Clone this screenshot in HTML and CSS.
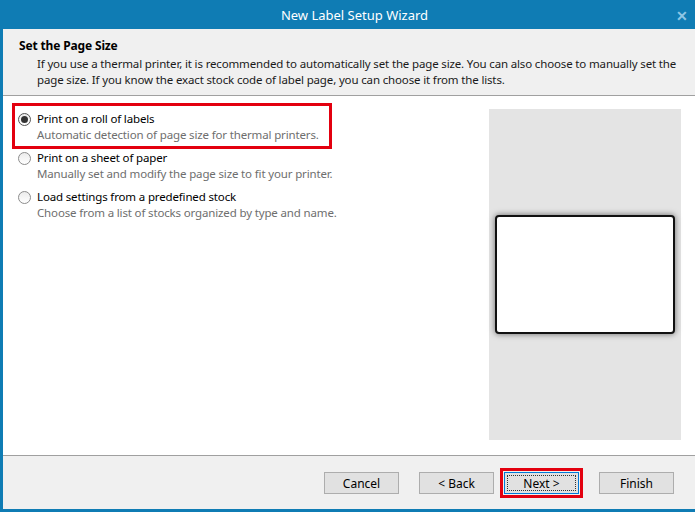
FILE: index.html
```html
<!DOCTYPE html>
<html lang="en">
<head>
    <meta charset="UTF-8">
    <title>New Label Setup Wizard</title>
    <link rel="stylesheet" href="styles.css">
</head>
<body>
    <div class="window">
        <div class="titlebar">
            <span class="title">New Label Setup Wizard</span>
            <span class="close">&#x2715;</span>
        </div>

        <div class="header">
            <h1>Set the Page Size</h1>
            <p>If you use a thermal printer, it is recommended to automatically set the page size. You can also choose to manually set the page size. If you know the exact stock code of label page, you can choose it from the lists.</p>
        </div>

        <div class="content">
            <div class="options">
                <label class="option highlight">
                    <span class="radio checked"></span>
                    <span class="option-text">
                        <span class="option-label">Print on a roll of labels</span>
                        <span class="option-desc">Automatic detection of page size for thermal printers.</span>
                    </span>
                </label>
                <label class="option">
                    <span class="radio"></span>
                    <span class="option-text">
                        <span class="option-label">Print on a sheet of paper</span>
                        <span class="option-desc">Manually set and modify the page size to fit your printer.</span>
                    </span>
                </label>
                <label class="option">
                    <span class="radio"></span>
                    <span class="option-text">
                        <span class="option-label">Load settings from a predefined stock</span>
                        <span class="option-desc">Choose from a list of stocks organized by type and name.</span>
                    </span>
                </label>
            </div>
            <div class="preview">
                <div class="label-shape"></div>
            </div>
        </div>

        <div class="footer">
            <button class="btn">Cancel</button>
            <button class="btn">&lt; Back</button>
            <button class="btn default highlight-btn"><span class="focus">Next &gt;</span></button>
            <button class="btn">Finish</button>
        </div>
    </div>
</body>
</html>
```

FILE: styles.css
```css
* {
    margin: 0;
    padding: 0;
    box-sizing: border-box;
}
body {
    font-family: 'Noto Sans', 'Open Sans', sans-serif;
    font-size: 11.5px;
    letter-spacing: -0.15px;
    width: 695px;
    height: 512px;
    overflow: hidden;
    background: #ffffff;
    color: #000;
}
.window {
    display: flex;
    flex-direction: column;
    height: 512px;
    border-left: 3px solid #0f7cb4;
    border-bottom: 3px solid #0f7cb4;
}
.titlebar {
    position: relative;
    height: 29px;
    margin-left: -3px;
    background: #0f7cb4;
    color: #fff;
    display: flex;
    align-items: center;
    justify-content: center;
}
.title {
    font-size: 13px;
    letter-spacing: 0;
    padding-left: 14px;
}
.close {
    position: absolute;
    right: 7px;
    top: 6px;
    color: #8ec6e4;
    font-size: 14px;
    font-weight: bold;
}
.header {
    height: 67px;
    background: #f0f0f0;
    border-bottom: 1px solid #a0a0a0;
    padding: 9px 8px 0 16px;
}
.header h1 {
    font-size: 12px;
    font-weight: bold;
    line-height: 16px;
    margin-bottom: 2px;
}
.header p {
    line-height: 16px;
    padding-left: 18px;
    color: #1a1a1a;
}
.content {
    flex: 1;
    display: flex;
    justify-content: space-between;
    padding: 15px 14px 15px 15px;
}
.options {
    display: flex;
    flex-direction: column;
    align-items: flex-start;
    gap: 7px;
}
.option {
    display: inline-flex;
    align-items: flex-start;
    gap: 6px;
    padding: 0 5px 0 0;
}
.option.highlight {
    outline: 3px solid #e3000f;
    outline-offset: 3px;
    margin-top: -2px;
    padding-top: 2px;
    padding-right: 7px;
}
.radio {
    width: 13px;
    height: 13px;
    margin-top: 2px;
    border: 1px solid #8c8c8c;
    border-radius: 50%;
    background: linear-gradient(#ececec, #ffffff);
    position: relative;
}
.radio.checked {
    border-color: #555;
}
.radio.checked::after {
    content: "";
    position: absolute;
    left: 2px;
    top: 2px;
    width: 7px;
    height: 7px;
    border-radius: 50%;
    background: #333;
}
.option-text {
    display: flex;
    flex-direction: column;
    line-height: 16px;
}
.option-label {
    color: #000;
}
.option-desc {
    color: #6e6e6e;
}
.preview {
    width: 192px;
    height: 331px;
    margin-top: -2px;
    background: #e4e4e4;
    display: flex;
    align-items: center;
    justify-content: center;
}
.label-shape {
    width: 180px;
    height: 119px;
    background: #fff;
    border: 2px solid #111;
    border-radius: 4px;
    box-shadow: 0 0 6px rgba(0, 0, 0, 0.55);
}
.footer {
    height: 54px;
    background: #f0f0f0;
    border-top: 1px solid #a0a0a0;
    display: flex;
    justify-content: flex-end;
    align-items: flex-start;
    gap: 20px;
    padding: 16px 21px 0 0;
}
.btn {
    width: 75px;
    height: 22px;
    font-family: inherit;
    font-size: 12px;
    letter-spacing: 0;
    color: #000;
    background: #e1e1e1;
    border: 1px solid #adadad;
    display: flex;
    align-items: center;
    justify-content: center;
}
.btn.default {
    border-color: #0078d7;
    padding: 2px;
    margin-left: -10px;
}
.btn .focus {
    width: 100%;
    height: 100%;
    border: 1px dotted #333;
    display: flex;
    align-items: center;
    justify-content: center;
}
.highlight-btn {
    outline: 3px solid #e3000f;
    outline-offset: 1px;
}
```
